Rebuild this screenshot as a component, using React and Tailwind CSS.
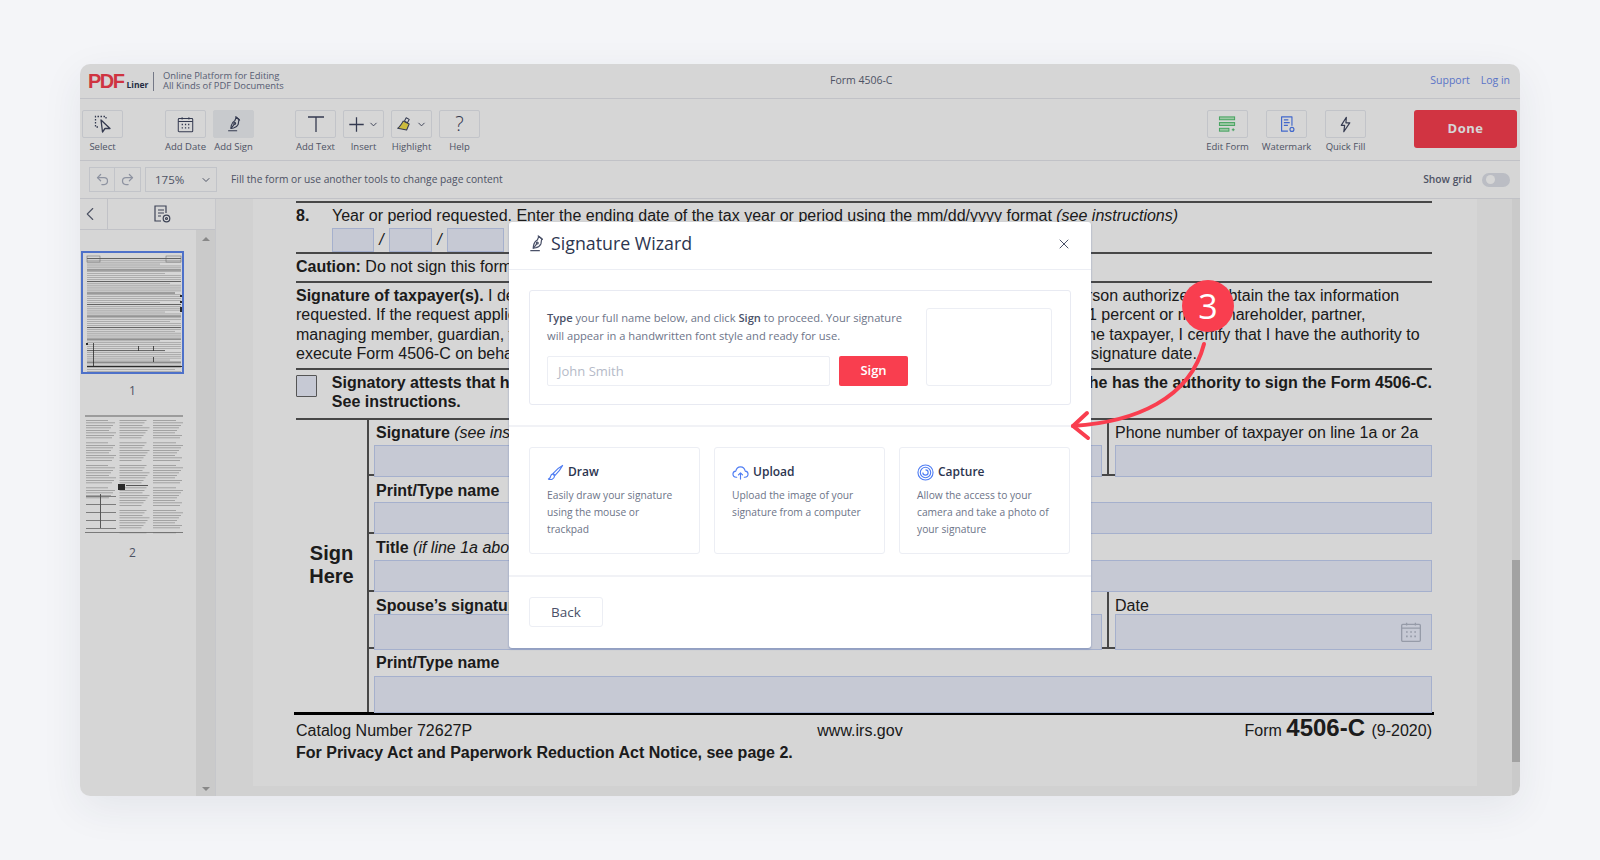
import { Undo2, Redo2, ChevronDown, ChevronLeft, X } from "lucide-react";

const ui = "font-['Open_Sans',sans-serif]";
const doc = "font-['Liberation_Sans',Arial,sans-serif]";

function PenIcon({ className }) {
  return (
    <svg viewBox="0 0 20 20" fill="none" stroke="currentColor" strokeWidth="1.3" strokeLinecap="round" strokeLinejoin="round" className={className}>
      <path d="M12.5 2.5l3 2.5-.8 5.2c-.9 2.2-2.7 3.6-5.2 4.2l-3 .6.5-3.2c.5-2.6 1.800-4.500 3.900-5.500z" />
      <path d="M7 14.500l3.200-4" />
      <circle cx="10.800" cy="9.500" r="1" />
      <path d="M4 17.500h9" />
      <path d="M11.800 2l4.400 3.600" />
    </svg>
  );
}

function CalendarIcon({ className }) {
  return (
    <svg viewBox="0 0 20 20" fill="none" stroke="currentColor" strokeWidth="1.2" className={className}>
      <rect x="1.500" y="3" width="17" height="15.500" rx="1" />
      <path d="M1.500 6.500h17M6 1.500v2.500M14 1.500v2.500" />
      <path d="M5.500 10h1.500M9.300 10h1.500M13 10h1.500M5.500 14h1.500M9.300 14h1.500M13 14h1.500" strokeWidth="1.500" />
    </svg>
  );
}

function SelectIcon() {
  return (
    <svg viewBox="0 0 20 20" fill="none" className="w-[20px] h-[20px]" stroke="#3f4660" strokeWidth="1.300">
      <path d="M5 13H2.500V2.500H13V5" strokeDasharray="1.500 1.500" />
      <path d="M8 6l1.500 12 2.500-3.500h5z" strokeLinejoin="round" />
    </svg>
  );
}

function BrushIcon() {
  return (
    <svg viewBox="0 0 20 20" className="w-[17px] h-[17px]" fill="none" stroke="#3f4660" strokeWidth="1.200" strokeLinejoin="round">
      <path d="M12 2l3.500 2-2 4-3.500-2z" />
      <path d="M8.500 6l7 3.500-3 7L2 14.500c2-1 4-4.500 6.500-8.500z" fill="#f4e04a" />
    </svg>
  );
}

function WatermarkIcon() {
  return (
    <svg viewBox="0 0 20 20" className="w-[18px] h-[18px]" fill="none" stroke="#4f7df3" strokeWidth="1.300">
      <path d="M11 18H4V2h11.500v10" strokeLinejoin="round" />
      <path d="M6.500 5.500h5M6.500 8.500h6.500M6.500 11.500h4.500" />
      <circle cx="15.500" cy="16" r="2.200" />
    </svg>
  );
}

function EditFormIcon() {
  return (
    <svg viewBox="0 0 20 20" className="w-[19px] h-[19px]" fill="#b9efc4" stroke="#4fc06e" strokeWidth="1">
      <rect x="1.500" y="2" width="16" height="3" />
      <rect x="1.500" y="8" width="16" height="3" />
      <rect x="1.500" y="14" width="10" height="3" />
      <path d="M14.500 15.500h3M16 14v3" />
    </svg>
  );
}

function BoltIcon() {
  return (
    <svg viewBox="0 0 20 20" className="w-[17px] h-[17px]" fill="none" stroke="#3f4660" strokeWidth="1.400" strokeLinejoin="round">
      <path d="M11 1.500L5 11h4l-1 7.500L15 8h-4.500z" />
    </svg>
  );
}

function Tool({ label, active, children, wide }) {
  return (
    <div className="flex flex-col items-center w-[41px]">
      <div className={`w-[41px] h-[28px] rounded-[2px] border flex items-center justify-center gap-[3px] ${active ? "bg-[#eff1f5] border-[#eff1f5]" : "bg-white border-[#e8eaf0]"}`}>
        {children}
        {wide && <ChevronDown size={11} strokeWidth={2} className="text-[#3f4660]" />}
      </div>
      <span className="mt-[2px] text-[9.5px] leading-[13px] whitespace-nowrap text-[#5d6478]">{label}</span>
    </div>
  );
}

// thumbnails are only a texture of rules and grey lines
function ThumbOne() {
  const rows = [];
  for (let i = 0; i < 60; i++) {
    const y = 5 + i * 1.92;
    const strong = i % 6 === 0;
    rows.push(<rect key={i} x="4" y={y} width={i % 5 === 3 ? 70 + (i % 20) : 94} height={strong ? 0.900 : 0.550} fill={strong ? "#666" : "#a5a5a5"} />);
  }
  return (
    <svg viewBox="0 0 99 119" preserveAspectRatio="none" className="w-full h-full">
      {rows}
      <rect x="4" y="3" width="13" height="6" fill="none" stroke="#777" strokeWidth="0.500" />
      <rect x="83" y="3" width="15" height="6" fill="none" stroke="#777" strokeWidth="0.500" />
      <rect x="97" y="42" width="2" height="2" fill="#333" />
      <rect x="97" y="48" width="2" height="2" fill="#333" />
      <rect x="97" y="54" width="2" height="5" fill="#333" />
      <rect x="10" y="90" width="0.800" height="24" fill="#333" />
      <rect x="3" y="90" width="2" height="2" fill="#333" />
      <rect x="55" y="93" width="0.800" height="5" fill="#333" />
      <rect x="70" y="93" width="0.800" height="5" fill="#333" />
      <rect x="70" y="104" width="0.800" height="5" fill="#333" />
      <rect x="4" y="113" width="95" height="1" fill="#333" />
    </svg>
  );
}

function ThumbTwo() {
  const rows = [];
  for (let c = 0; c < 3; c++) {
    for (let i = 0; i < 46; i++) {
      if (i % 9 === 8 || (c === 0 && i > 31)) continue;
      const w = 22 + ((i * 7 + c * 5) % 9);
      rows.push(<rect key={`${c}-${i}`} x={3 + c * 33.500} y={6 + i * 2.500} width={w} height="0.700" fill="#a8a8a8" />);
    }
  }
  return (
    <svg viewBox="0 0 101 124" preserveAspectRatio="none" className="w-full h-full">
      <rect x="2" y="1.500" width="98" height="1" fill="#777" />
      {rows}
      <rect x="35" y="70" width="7" height="6" fill="#333" />
      <rect x="43" y="71" width="22" height="1" fill="#666" />
      <rect x="17" y="80" width="0.800" height="34" fill="#444" />
      <rect x="3" y="82" width="30" height="0.700" fill="#666" />
      <rect x="3" y="90" width="30" height="0.700" fill="#666" />
      <rect x="3" y="98" width="30" height="0.700" fill="#666" />
      <rect x="3" y="106" width="30" height="0.700" fill="#666" />
      <rect x="3" y="114" width="30" height="0.700" fill="#666" />
      <rect x="2" y="118" width="98" height="0.800" fill="#777" />
    </svg>
  );
}

function Field({ className, calendar }) {
  return (
    <div className={`bg-[#ecf0fd] border border-[#c5d2f5] flex items-center justify-end ${className}`}>
      {calendar && <CalendarIcon className="w-[22px] h-[22px] mr-[9px] text-[#b3b9c9]" />}
    </div>
  );
}

function Rule() {
  return <div className="h-[2px] bg-[#555]" />;
}

function SplitLine({ left, right, shift }) {
  return (
    <div className="flex h-[19.3px] leading-[19.3px] whitespace-nowrap">
      <div className="w-[213px]">{left}</div>
      <div className={shift}>{right}</div>
    </div>
  );
}

function OptionCard({ icon, title, children }) {
  return (
    <div className="flex-1 h-[107px] border border-[#eceef4] rounded-[3px] pt-[15px] pl-[17px]">
      <div className="flex items-center gap-[4px] h-[18px] text-[12px] font-semibold text-[#2c3550]">
        {icon}
        {title}
      </div>
      <p className="mt-[6px] w-[134px] text-[10.25px] leading-[17px] text-[#6d7488]">{children}</p>
    </div>
  );
}

export default function App() {
  return (
    <div className={`${ui} h-[860px] bg-[#f4f5f8] flex justify-center pt-[64px] overflow-hidden`}>
      <div className="relative w-[1440px] h-[732px] rounded-[10px] overflow-hidden bg-white shadow-[0_12px_40px_rgba(40,50,80,0.08)]">
        <div className="h-[35px] border-b border-[#e6e8ee] flex items-center pr-[10px]">
          <div className="w-[73px] pl-[8px] flex items-baseline">
            <span className={`${doc} text-[#f73e4e] text-[20px] font-bold leading-none tracking-[-1.5px]`}>PDF</span>
            <span className="text-[#2c3550] text-[8.5px] font-bold ml-[3px]">Liner</span>
          </div>
          <div className="w-px h-[19px] bg-[#8b90a0]" />
          <div className="ml-[9px] text-[9.4px] leading-[10px] text-[#69708a] whitespace-nowrap w-[667px]">
            <div>Online Platform for Editing</div>
            <div>All Kinds of PDF Documents</div>
          </div>
          <div className="text-[10.5px] text-[#5d6478]">Form 4506-C</div>
          <div className="ml-auto flex gap-[11px] text-[10.5px] text-[#6d8bee]">
            <span>Support</span>
            <span>Log in</span>
          </div>
        </div>

        <div className="h-[62px] border-b border-[#e6e8ee] flex pt-[11px] pl-[2px]">
          <Tool label="Select"><SelectIcon /></Tool>
          <div className="flex gap-[7px] ml-[42px]">
            <Tool label="Add Date"><CalendarIcon className="w-[17px] h-[17px] text-[#3f4660]" /></Tool>
            <Tool label="Add Sign" active><PenIcon className="w-[18px] h-[18px] text-[#3f4660]" /></Tool>
          </div>
          <div className="flex gap-[7px] ml-[41px]">
            <Tool label="Add Text">
              <svg viewBox="0 0 20 20" className="w-[20px] h-[20px]" fill="none" stroke="#3f4660" strokeWidth="1.300">
                <path d="M2 3h16M10 3v15" />
              </svg>
            </Tool>
            <Tool label="Insert" wide>
              <svg viewBox="0 0 20 20" className="w-[17px] h-[17px]" fill="none" stroke="#3f4660" strokeWidth="1.500">
                <path d="M1.500 10h17M10 1.500v17" />
              </svg>
            </Tool>
            <Tool label="Highlight" wide><BrushIcon /></Tool>
            <Tool label="Help"><span className="text-[20px] leading-none font-light text-[#3f4660]">?</span></Tool>
          </div>
          <div className="ml-auto flex gap-[18px]">
            <Tool label="Edit Form"><EditFormIcon /></Tool>
            <Tool label="Watermark"><WatermarkIcon /></Tool>
            <Tool label="Quick Fill"><BoltIcon /></Tool>
          </div>
          <button className="ml-[48px] mr-[3px] w-[103px] h-[38px] rounded-[3px] bg-[#f93e4f] text-white text-[13px] font-bold tracking-[0.5px]">Done</button>
        </div>

        <div className="h-[38px] border-b border-[#e6e8ee] flex items-center pl-[9px] pr-[10px]">
          <div className="w-[26px] h-[25px] border border-[#e8eaf0] flex items-center justify-center"><Undo2 size={15} className="text-[#aab0c0]" /></div>
          <div className="w-[26px] h-[25px] border border-l-0 border-[#e8eaf0] flex items-center justify-center"><Redo2 size={15} className="text-[#aab0c0]" /></div>
          <div className="ml-[4px] w-[72px] h-[25px] border border-[#e8eaf0] flex items-center justify-between pl-[9px] pr-[4px] text-[11.500px] text-[#5d6478]">
            175%
            <ChevronDown size={12} strokeWidth={2} />
          </div>
          <span className="ml-[14px] text-[10.25px] text-[#5d6478]">Fill the form or use another tools to change page content</span>
          <span className="ml-auto text-[10.25px] font-semibold text-[#5d6478]">Show grid</span>
          <div className="ml-[10px] w-[28px] h-[14px] rounded-full bg-[#dfe2ea] flex items-center pl-[4px]">
            <div className="w-[9px] h-[9px] rounded-full bg-white" />
          </div>
        </div>

        <div className="flex h-[597px]">
          <div className="w-[136px] border-r border-[#eceef2] flex flex-col shrink-0">
            <div className="h-[31px] border-b border-[#e6e8ee] flex">
              <div className="w-[30px] border-r border-[#e6e8ee] flex items-center -ml-[2px] pl-[1px]">
                <ChevronLeft size={22} strokeWidth={1.200} className="text-[#5d6478]" />
              </div>
              <div className="flex-1 flex items-center justify-center">
                <svg viewBox="0 0 20 20" className="w-[20px] h-[20px]" fill="none" stroke="#4a5168" strokeWidth="1.200">
                  <path d="M9 17H3V2h11v7M6 6h6M6 9h6M6 12h3" />
                  <circle cx="14.500" cy="14.500" r="3.300" />
                  <circle cx="14.500" cy="14.500" r="1" />
                </svg>
              </div>
            </div>
            <div className="flex-1 flex">
              <div className="w-[116px] pl-[1px]">
                <div className="mt-[21px] w-[103px] h-[123px] border-2 border-[#5d87f0] bg-white"><ThumbOne /></div>
                <div className="mt-[8px] w-[103px] text-center text-[12px] text-[#5d6478]">1</div>
                <div className="mt-[14px] ml-[2px] w-[101px] h-[124px] bg-white"><ThumbTwo /></div>
                <div className="mt-[6px] w-[103px] text-center text-[12px] text-[#5d6478]">2</div>
              </div>
              <div className="flex-1 bg-[#f1f1f1] flex flex-col items-center justify-between pt-[7px] pb-[5px]">
                <div className="w-0 h-0 border-x-[4px] border-x-transparent border-b-[4px] border-b-[#a3a3a3]" />
                <div className="w-0 h-0 border-x-[4px] border-x-transparent border-t-[4px] border-t-[#a3a3a3]" />
              </div>
            </div>
          </div>

          <div className="flex-1 bg-[#fafafa] flex pl-[37px] pr-[43px] min-w-0">
            <div className={`${doc} w-[1224px] h-[587px] bg-white shrink-0 pl-[43px] pr-[45px] pt-[2px] text-[16px] text-[#222] whitespace-nowrap`}>
              <Rule />
              <div className="h-[49px] flex flex-col">
                <div className="flex h-[22px] pt-[1px]">
                  <span className="w-[36px] font-bold text-[#222]">8.</span>
                  <span>Year or period requested. Enter the ending date of the tax year or period using the mm/dd/yyyy format <i>(see instructions)</i></span>
                </div>
                <div className="flex items-end mt-[3px] pl-[36px] h-[24px]">
                  <Field className="w-[42px] h-[24px]" />
                  <span className="w-[15px] text-center italic">/</span>
                  <Field className="w-[43px] h-[24px]" />
                  <span className="w-[15px] text-center italic">/</span>
                  <Field className="w-[57px] h-[24px]" />
                </div>
              </div>
              <Rule />
              <div className="h-[27px] leading-[25px]"><b>Caution:</b> Do not sign this form</div>
              <Rule />
              <div className="h-[85px] pt-[3px]">
                <SplitLine left={<><b>Signature of taxpayer(s).</b> I declare</>} right="rson authorized to obtain the tax information" shift="ml-[578px]" />
                <SplitLine left="requested. If the request applies" right="1 percent or more shareholder, partner," shift="ml-[579px]" />
                <SplitLine left="managing member, guardian, tax" right="he taxpayer, I certify that I have the authority to" shift="ml-[578px]" />
                <SplitLine left="execute Form 4506-C on behalf" right="signature date." shift="ml-[582px]" />
              </div>
              <Rule />
              <div className="h-[48px] flex font-bold">
                <div className="w-[36px] pt-[5px]"><div className="w-[21px] h-[22px] bg-[#ecf0fd] border border-[#666] rounded-[1px]" /></div>
                <div className="pt-[3px] leading-[19px] ml-[3px]">
                  <div className="flex">
                    <div className="w-[175px]">Signatory attests that he/she</div>
                    <div className="ml-[582px]">he has the authority to sign the Form 4506-C.</div>
                  </div>
                  <div>See instructions.</div>
                </div>
              </div>
              <Rule />
              <div className="flex h-[292px]">
                <div className="w-[73px] border-r-2 border-[#555] flex justify-center text-center text-[20px] leading-[23px] font-bold pt-[122px]">
                  <div>Sign<br />Here</div>
                </div>
                <div className="flex-1 min-w-0">
                  <div className="h-[56px] flex border-b-2 border-[#555]">
                    <div className="w-[733px] pl-[5px]">
                      <div className="h-[25px] leading-[26px] pl-[2px]"><b>Signature</b> <i>(see instructions)</i></div>
                      <Field className="h-[32px]" calendar />
                    </div>
                    <div className="w-[2px] ml-[5px] bg-[#555]" />
                    <div className="flex-1 ml-[6px]">
                      <div className="h-[25px] leading-[26px]">Phone number of taxpayer on line 1a or 2a</div>
                      <Field className="h-[32px]" />
                    </div>
                  </div>
                  <div className="h-[58px] border-b-2 border-[#555] pl-[5px]">
                    <div className="h-[26px] leading-[30px] pl-[2px] font-bold">Print/Type name</div>
                    <Field className="h-[32px]" />
                  </div>
                  <div className="h-[58px] border-b-2 border-[#555] pl-[5px]">
                    <div className="h-[26px] leading-[28px] pl-[2px]"><b>Title</b> <i>(if line 1a above</i></div>
                    <Field className="h-[32px]" />
                  </div>
                  <div className="h-[57px] flex border-b-2 border-[#555]">
                    <div className="w-[733px] pl-[5px]">
                      <div className="h-[22px] leading-[28px] pl-[2px] font-bold">Spouse’s signature</div>
                      <Field className="h-[36px]" calendar />
                    </div>
                    <div className="w-[2px] ml-[5px] bg-[#555]" />
                    <div className="flex-1 ml-[6px]">
                      <div className="h-[22px] leading-[28px]">Date</div>
                      <Field className="h-[36px]" calendar />
                    </div>
                  </div>
                  <div className="h-[63px] pl-[5px]">
                    <div className="h-[27px] leading-[27px] pl-[2px] font-bold">Print/Type name</div>
                    <Field className="h-[37px]" />
                  </div>
                </div>
              </div>
              <div className="h-[3px] bg-black -mx-[2px]" />
              <div className="flex justify-between items-end h-[28px]">
                <span className="w-[400px]">Catalog Number 72627P</span>
                <span className="text-center mr-[8px]">www.irs.gov</span>
                <span className="w-[400px] text-right">Form <b className="text-[24px] leading-[24px]">4506-C</b> <span className="ml-[2px]">(9-2020)</span></span>
              </div>
              <div className="font-bold leading-[20px]">For Privacy Act and Paperwork Reduction Act Notice, see page 2.</div>
            </div>
          </div>
          <div className="w-[8px] shrink-0 bg-[#f1f1f1] flex flex-col">
            <div className="h-[361px]" />
            <div className="h-[202px] bg-[#c1c1c1]" />
          </div>
        </div>

        {/* dim layer and the dialog on top of the editor */}
        <div className="absolute inset-0 bg-black/16 flex justify-center items-start pt-[158px]">
          <div className="w-[582px] h-[426px] bg-white rounded-[3px] flex flex-col shadow-[0_1px_2px_rgba(60,90,160,0.5)]">
            <div className="h-[48px] shrink-0 border-b border-[#eceef4] flex items-center pl-[18px] pr-[19px] pb-[4px]">
              <PenIcon className="w-[19px] h-[19px] text-[#4a5168]" />
              <h2 className="ml-[5px] text-[17.8px] font-normal text-[#2c3550]">Signature Wizard</h2>
              <X size={16} strokeWidth={1.500} className="ml-auto text-[#4a5168]" />
            </div>
            <div className="h-[157px] shrink-0 border-b-2 border-[#f1f2f6] px-[20px] pt-[20px]">
              <div className="h-[115px] border border-[#e8eaf2] rounded-[3px] flex pl-[17px] pt-[18px]">
                <div className="w-[371px]">
                  <p className="text-[11.15px] leading-[18px] text-[#6d7488]">
                    <b className="font-semibold text-[#4a5168]">Type</b> your full name below, and click <b className="font-semibold text-[#4a5168]">Sign</b> to proceed. Your signature<br />will appear in a handwritten font style and ready for use.
                  </p>
                  <div className="flex mt-[11px] gap-[9px]">
                    <div className="w-[283px] h-[30px] border border-[#eceef4] rounded-[2px] pl-[10px] leading-[28px] text-[13px] text-[#b5bac8]">John Smith</div>
                    <button className="w-[69px] h-[30px] rounded-[2px] bg-[#f93e4f] text-white text-[13px] font-semibold">Sign</button>
                  </div>
                </div>
                <div className="ml-[8px] -mt-[1px] w-[126px] h-[78px] border border-[#eceef4] rounded-[3px]" />
              </div>
            </div>
            <div className="h-[150px] shrink-0 border-b-2 border-[#f1f2f6] pl-[20px] pr-[21px] pt-[20px] flex gap-[14px]">
              <OptionCard
                title="Draw"
                icon={
                  <svg viewBox="0 0 18 18" className="w-[17px] h-[17px]" fill="none" stroke="#4f7df3" strokeWidth="1.200" strokeLinejoin="round">
                    <path d="M16.500 1.500c-3 1.500-8 6-10 8.500l2 2c2.500-2.500 6.500-7.500 8-10.500z" />
                    <path d="M6 10.500c-2 .5-2 2-2.500 3.500-.3 1-1 1.500-2 2 2.500 1 6 .5 6.500-3.500z" />
                  </svg>
                }
              >
                Easily draw your signature using the mouse or trackpad
              </OptionCard>
              <OptionCard
                title="Upload"
                icon={
                  <svg viewBox="0 0 18 18" className="w-[17px] h-[17px]" fill="none" stroke="#4f7df3" strokeWidth="1.200" strokeLinejoin="round" strokeLinecap="round">
                    <path d="M5 14H4.500C2.500 14 1 12.500 1 10.700c0-1.700 1.300-3 3-3.200C4.500 5 6.500 3 9 3s4.500 2 5 4.500c1.700.2 3 1.500 3 3.200 0 1.800-1.500 3.300-3.500 3.300H13" />
                    <path d="M9 16V9.500M6.800 11.500L9 9.300l2.200 2.200" />
                  </svg>
                }
              >
                Upload the image of your signature from a computer
              </OptionCard>
              <OptionCard
                title="Capture"
                icon={
                  <svg viewBox="0 0 18 18" className="w-[17px] h-[17px]" fill="none" stroke="#4f7df3" strokeWidth="1.200">
                    <circle cx="9" cy="9" r="8" />
                    <circle cx="9" cy="9" r="5.500" />
                    <path d="M9 6.200a2.800 2.800 0 1 1-2.800 2.800" />
                  </svg>
                }
              >
                Allow the access to your camera and take a photo of your signature
              </OptionCard>
            </div>
            <div className="pl-[20px] pt-[20px]">
              <button className="w-[74px] h-[30px] border border-[#eceef4] rounded-[3px] text-[13.500px] text-[#4a5168]">Back</button>
            </div>
          </div>
        </div>

        {/* numbered callout */}
        <div className="absolute left-[1102px] top-[216px] w-[52px] h-[52px] rounded-full bg-[#f93e4f] flex items-center justify-center text-white text-[34px] font-medium leading-none">3</div>
        <svg viewBox="0 0 170 110" className="absolute left-[985px] top-[270px] w-[170px] h-[110px]" fill="none" stroke="#f93e4f" strokeWidth="4" strokeLinecap="round" strokeLinejoin="round">
          <path d="M139 10C125 65 70 88 8 92" />
          <path d="M22 79L8 92 23 104" />
        </svg>
      </div>
    </div>
  );
}
